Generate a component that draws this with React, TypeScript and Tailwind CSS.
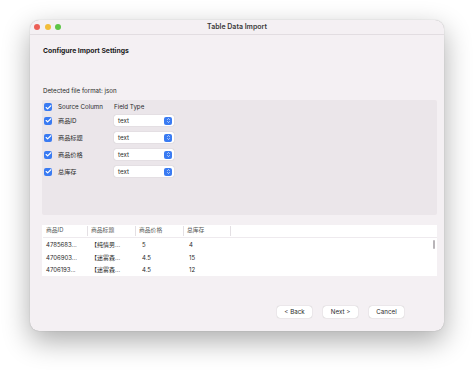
import { Check, ChevronDown, ChevronUp } from "lucide-react";

const fields = ["商品ID", "商品标题", "商品价格", "总库存"];

const rows = [
  ["4785683...", "【纯情男...", "5", "4"],
  ["4706903...", "【迷雾森...", "4.5", "15"],
  ["4706193...", "【迷雾森...", "4.5", "12"],
];

const font = "font-['Inter','Noto_Sans_CJK_SC',sans-serif]";

const CheckBox = () => (
  <span className="flex h-[8px] w-[8px] items-center justify-center rounded-[2px] bg-[#3a7bf2]">
    <Check className="h-[7px] w-[7px] text-white" strokeWidth={4} />
  </span>
);

const TypeSelect = () => (
  <div className="flex h-[11px] w-[60px] items-center justify-between rounded-[2px] bg-white pl-[4px] pr-[2px] shadow-[0_0_1px_rgba(0,0,0,0.3)]">
    <span className="text-[6.2px] text-[#2a2a2a]">text</span>
    <span className="flex h-[8px] w-[8px] flex-col items-center justify-center rounded-[2px] bg-[#3a7bf2]">
      <ChevronUp className="-mb-[1px] h-[4px] w-[5px] text-white" strokeWidth={4} />
      <ChevronDown className="h-[4px] w-[5px] text-white" strokeWidth={4} />
    </span>
  </div>
);

const Button = ({ label }: { label: string }) => (
  <button className="flex h-[12px] w-[35px] items-center justify-center rounded-[3px] bg-white text-[6.2px] text-[#2a2a2a] shadow-[0_0_1px_rgba(0,0,0,0.35)]">
    {label}
  </button>
);

const App = () => {
  return (
    <div className={`h-[370px] w-[474px] bg-white pl-[30px] pt-[20px] ${font}`}>
      <div className="flex h-[311px] w-[414px] flex-col overflow-hidden rounded-[9px] bg-[#f4f0f3] shadow-[0_10px_28px_rgba(0,0,0,0.33),0_0_1px_rgba(0,0,0,0.3)]">
        {/* title bar */}
        <div className="relative flex h-[15px] shrink-0 items-center justify-center border-b border-[#e2dde1]">
          <div className="absolute left-[4px] top-[4px] flex gap-[4.5px]">
            <span className="h-[6px] w-[6px] rounded-full bg-[#ec5f57]" />
            <span className="h-[6px] w-[6px] rounded-full bg-[#f2bd3b]" />
            <span className="h-[6px] w-[6px] rounded-full bg-[#5ec548]" />
          </div>
          <span className="text-[7px] font-semibold text-[#3a3a3a]">Table Data Import</span>
        </div>

        <div className="flex flex-1 flex-col pl-[12px] pr-[7px]">
          <div className="mt-[12px] pl-[1px] text-[6.8px] font-bold leading-[8px] text-[#1a1a1a]">
            Configure Import Settings
          </div>
          <div className="mt-[32px] pl-[1px] text-[6.2px] leading-[8px] text-[#2a2a2a]">
            Detected file format: json
          </div>

          {/* field panel */}
          <div className="mt-[5px] flex h-[115px] flex-col rounded-[2px] bg-[#ebe6ea] pl-[2px] pt-[2px]">
            <div className="flex h-[10px] items-center text-[6.2px] text-[#2a2a2a]">
              <span className="mr-[6px]"><CheckBox /></span>
              <span className="w-[56px]">Source Column</span>
              <span>Field Type</span>
            </div>
            <div className="mt-[3px] flex flex-col gap-[6px]">
              {fields.map((f) => (
                <div key={f} className="flex h-[11px] items-center text-[6.2px] text-[#2a2a2a]">
                  <span className="mr-[6px]"><CheckBox /></span>
                  <span className="w-[56px]">{f}</span>
                  <TypeSelect />
                </div>
              ))}
            </div>
          </div>

          {/* preview table */}
          <div className="mt-[10px] flex h-[51px] flex-col bg-white pl-[1px] text-[6px] text-[#2a2a2a]">
            <div className="flex h-[14px] items-center border-b border-[#eeeaee] text-[5.8px] text-[#555]">
              {["商品ID", "商品标题", "商品价格", "总库存"].map((h, i) => (
                <div
                  key={h}
                  className={`flex h-[10px] items-center border-r border-[#e4e0e4] pl-[3px] ${i === 0 ? "w-[45px]" : i === 3 ? "w-[47px]" : "w-[48px]"}`}
                >
                  {h}
                </div>
              ))}
            </div>
            <div className="relative flex flex-1 flex-col pt-[1px]">
              {rows.map((r) => (
                <div key={r[0]} className="flex h-[12.5px] items-center">
                  <div className="w-[45px] pl-[3px]">{r[0]}</div>
                  <div className="w-[48px] pl-[3px]">{r[1]}</div>
                  <div className="w-[48px] pl-[6px]">{r[2]}</div>
                  <div className="w-[47px] pl-[5px]">{r[3]}</div>
                </div>
              ))}
              <span className="absolute right-[2px] top-[2px] h-[9px] w-[2px] rounded-full bg-[#b8b4b8]" />
            </div>
          </div>

          {/* buttons */}
          <div className="mt-[30px] flex justify-end gap-[11px] pr-[33px]">
            <Button label="< Back" />
            <Button label="Next >" />
            <Button label="Cancel" />
          </div>
        </div>
      </div>
    </div>
  );
};

export default App;
